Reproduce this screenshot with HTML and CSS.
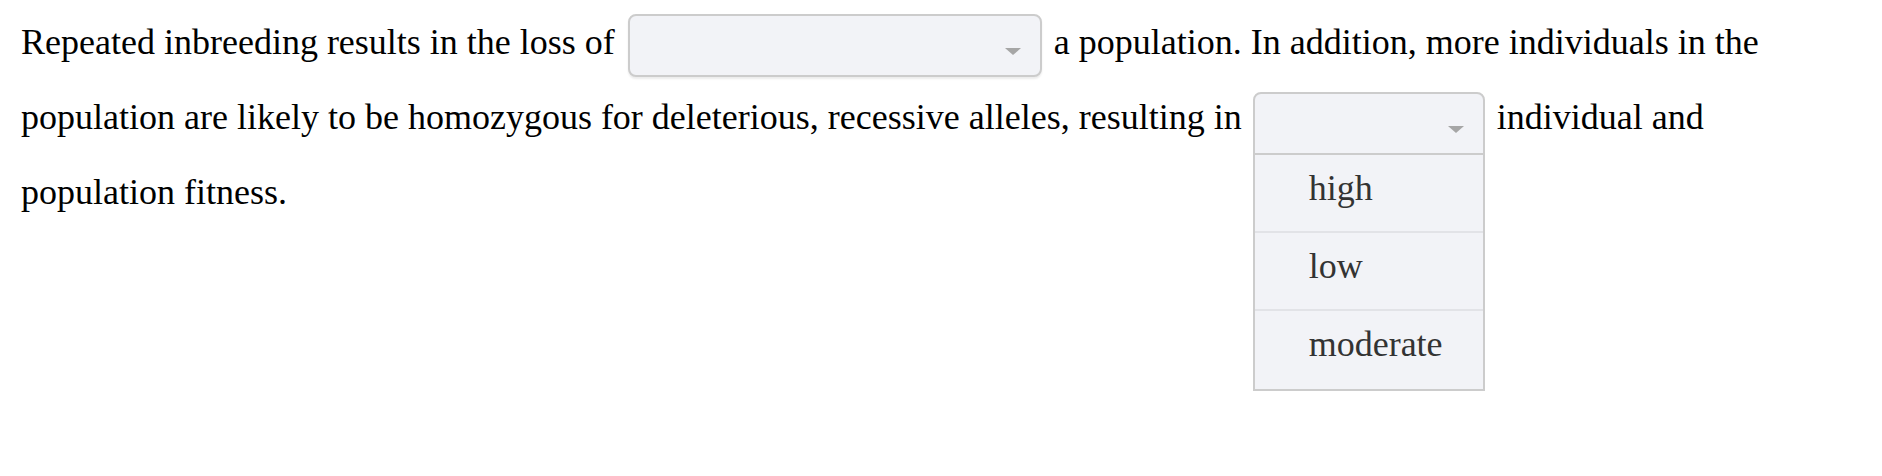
FILE: index.html
```html
<!DOCTYPE html>
<html lang="en">
<head>
<meta charset="utf-8">
<title>Inbreeding question</title>
<link rel="stylesheet" href="styles.css">
</head>
<body>
<p class="question">Repeated inbreeding results in the loss of <span class="dd dd-wide"><span class="dd-arrow"></span></span> a population. In addition, more individuals in the population are likely to be homozygous for deleterious, recessive alleles, resulting in <span class="dd dd-narrow dd-open"><span class="dd-arrow"></span><span class="dd-menu"><span class="dd-option">high</span><span class="dd-option">low</span><span class="dd-option">moderate</span></span></span> individual and population fitness.</p>
</body>
</html>
```
FILE: styles.css
```css
html, body {
  margin: 0;
  padding: 0;
  background: #ffffff;
}

html {
  min-height: 100%;
}

body {
  min-height: 100vh;
  font-family: "Liberation Serif", "Times New Roman", serif;
  color: #000000;
}

.question {
  margin: 0;
  padding: 5px 0 0 21px;
  max-width: 1800px;
  font-size: 36px;
  line-height: 75px;
}

.dd {
  position: relative;
  display: inline-flex;
  justify-content: flex-end;
  align-items: flex-start;
  box-sizing: border-box;
  height: 63px;
  padding: 32px 19px 0 0;
  margin: 0 3px 0 4px;
  vertical-align: middle;
  background: #f2f3f7;
  border: 2px solid #cccccc;
  border-radius: 8px;
  box-shadow: 0 2px 2px rgba(0, 0, 0, 0.08);
}

.dd-wide {
  width: 414px;
}

.dd-narrow {
  width: 232px;
  margin-left: 2px;
}

.dd-open {
  margin-top: 6px;
  border-radius: 8px 8px 0 0;
  box-shadow: none;
}

.dd-arrow {
  width: 0;
  height: 0;
  border-left: 8px solid transparent;
  border-right: 8px solid transparent;
  border-top: 7px solid #a6a6a6;
}

.dd-menu {
  position: absolute;
  top: calc(100% + 2px);
  left: -2px;
  right: -2px;
  display: block;
  background: #f2f3f7;
  border: 2px solid #cccccc;
  border-top: none;
  z-index: 2;
}

.dd-option {
  display: block;
  box-sizing: border-box;
  height: 78px;
  padding: 15px 0 0 54px;
  line-height: 36px;
  color: #333333;
  border-bottom: 2px solid #e2e3e7;
  text-align: left;
}

.dd-option:last-child {
  border-bottom: none;
}
```
